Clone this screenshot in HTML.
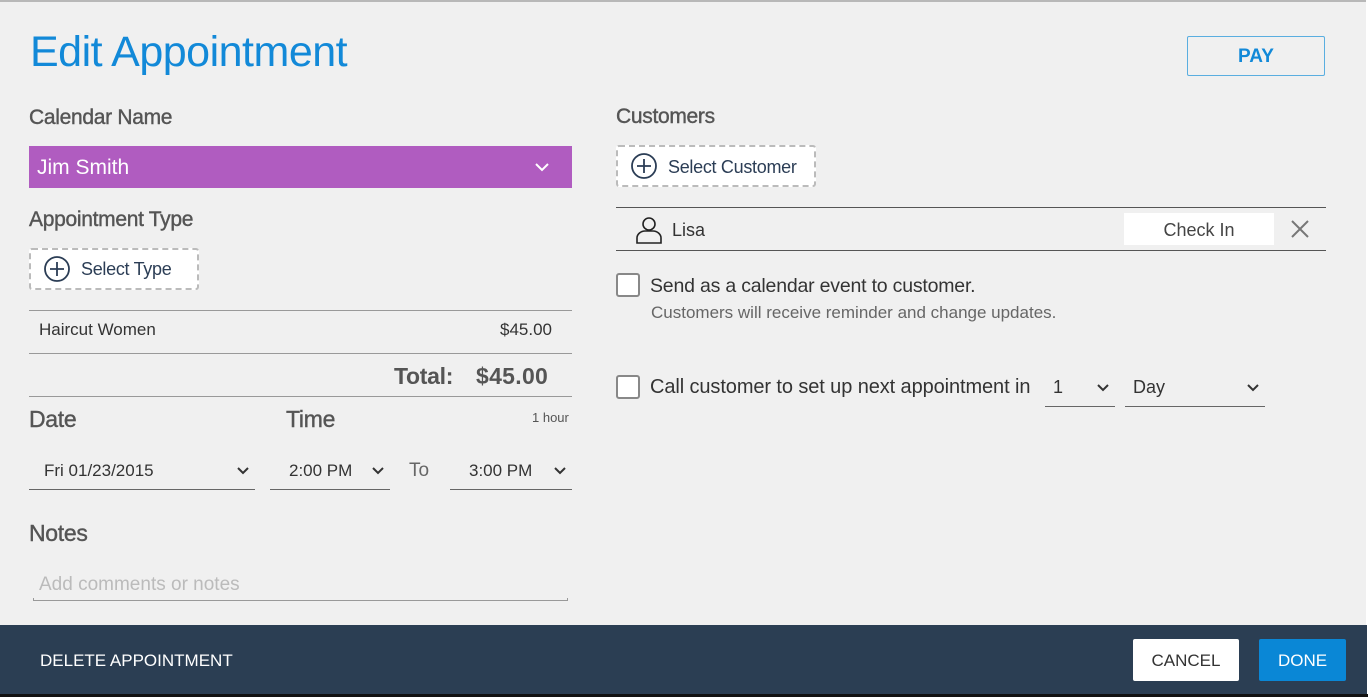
<!DOCTYPE html>
<html><head><style>
*{box-sizing:border-box;margin:0;padding:0}
body{width:1368px;height:697px;overflow:hidden;background:#f0f0f0;font-family:"Liberation Sans",sans-serif;position:relative;color:#333}
.a{position:absolute;white-space:nowrap}
.top{left:0;top:0;width:1368px;height:2px;background:#b8b8b8}
.lbl{font-size:21px;color:#555;letter-spacing:-0.3px;-webkit-text-stroke:0.4px #555}
.dash{border:2px dashed #bbb;background:#fff;border-radius:3px}
.line{height:1px;background:#999}
.sel{border-bottom:1px solid #666;font-size:17px;color:#333;padding-top:3px}
.chev{position:absolute;right:6px;top:4px}
.cb{width:24px;height:24px;border:2px solid #888;border-radius:3px;background:#fff}
</style></head><body>
<div class="a top"></div>
<div class="a" style="left:1366px;top:0;width:2px;height:697px;background:#fff"></div>
<div class="a" style="left:30px;top:28px;font-size:43px;color:#1289d8;letter-spacing:-0.5px">Edit Appointment</div>
<div class="a" style="left:1187px;top:36px;width:138px;height:40px;border:1px solid #5aaee0;border-radius:2px;color:#1289d8;font-weight:bold;font-size:19px;text-align:center;line-height:40px">PAY</div>

<div class="a lbl" style="left:29px;top:106px">Calendar Name</div>
<div class="a" style="left:29px;top:146px;width:543px;height:42px;background:#b05cc0;color:#fff;font-size:21px;line-height:44px;padding-left:8px">Jim Smith
<svg style="position:absolute;right:22px;top:16px" width="16" height="10"><path d="M2 2l6 6 6-6" stroke="#fff" stroke-width="2" fill="none"/></svg></div>
<div class="a lbl" style="left:29px;top:208px">Appointment Type</div>
<div class="a dash" style="left:29px;top:248px;width:170px;height:42px"></div>
<svg class="a" style="left:43px;top:255px" width="28" height="28"><circle cx="14" cy="14" r="12" stroke="#2b3d55" stroke-width="1.8" fill="none"/><path d="M14 7v14M7 14h14" stroke="#2b3d55" stroke-width="1.8"/></svg>
<div class="a" style="left:81px;top:259px;font-size:18px;color:#2b3d55;letter-spacing:-0.3px">Select Type</div>

<div class="a line" style="left:29px;top:310px;width:543px"></div>
<div class="a" style="left:39px;top:320px;font-size:17px">Haircut Women</div>
<div class="a" style="left:500px;top:320px;font-size:17px">$45.00</div>
<div class="a line" style="left:29px;top:353px;width:543px"></div>
<div class="a" style="left:394px;top:363px;font-size:23px;font-weight:bold;color:#555;letter-spacing:-0.3px">Total:</div>
<div class="a" style="left:476px;top:363px;font-size:23px;font-weight:bold;color:#555;letter-spacing:0.3px">$45.00</div>
<div class="a line" style="left:29px;top:396px;width:543px"></div>

<div class="a lbl" style="left:29px;top:406px;font-size:23px">Date</div>
<div class="a lbl" style="left:286px;top:406px;font-size:23px">Time</div>
<div class="a" style="left:532px;top:410px;font-size:13px;color:#555">1 hour</div>
<div class="a sel" style="left:29px;top:458px;width:226px;height:32px;padding-left:15px">Fri 01/23/2015<svg class="chev" width="14" height="10" style="top:8px;right:5px"><path d="M2 2l5 5 5-5" stroke="#333" stroke-width="2" fill="none"/></svg></div>
<div class="a sel" style="left:270px;top:458px;width:120px;height:32px;padding-left:19px">2:00 PM<svg class="chev" width="14" height="10" style="top:8px;right:5px"><path d="M2 2l5 5 5-5" stroke="#333" stroke-width="2" fill="none"/></svg></div>
<div class="a" style="left:409px;top:460px;font-size:19px;color:#666">To</div>
<div class="a sel" style="left:450px;top:458px;width:122px;height:32px;padding-left:19px">3:00 PM<svg class="chev" width="14" height="10" style="top:8px;right:5px"><path d="M2 2l5 5 5-5" stroke="#333" stroke-width="2" fill="none"/></svg></div>

<div class="a lbl" style="left:29px;top:520px;font-size:23px">Notes</div>
<div class="a" style="left:39px;top:574px;font-size:19px;color:#bbb">Add comments or notes</div>
<div class="a" style="left:33px;top:598px;width:535px;height:3px;border:1px solid #999;border-top:none"></div>

<div class="a lbl" style="left:616px;top:105px">Customers</div>
<div class="a dash" style="left:616px;top:145px;width:200px;height:42px"></div>
<svg class="a" style="left:630px;top:152px" width="28" height="28"><circle cx="14" cy="14" r="12" stroke="#2b3d55" stroke-width="1.8" fill="none"/><path d="M14 7v14M7 14h14" stroke="#2b3d55" stroke-width="1.8"/></svg>
<div class="a" style="left:668px;top:157px;font-size:18px;color:#2b3d55;letter-spacing:-0.3px">Select Customer</div>
<div class="a" style="left:616px;top:207px;width:710px;height:1px;background:#555"></div>
<svg class="a" style="left:634px;top:214px" width="30" height="30"><circle cx="15" cy="10" r="6" stroke="#222" stroke-width="1.6" fill="none"/><path d="M3 29v-5c0-4 4-7 8-7h8c4 0 8 3 8 7v5z" stroke="#222" stroke-width="1.6" fill="none"/></svg>
<div class="a" style="left:672px;top:220px;font-size:18px">Lisa</div>
<div class="a" style="left:1124px;top:213px;width:150px;height:32px;background:#fff;text-align:center;line-height:34px;font-size:18px;color:#444">Check In</div>
<svg class="a" style="left:1290px;top:219px" width="20" height="20"><path d="M2 2l16 16M18 2L2 18" stroke="#777" stroke-width="2"/></svg>
<div class="a" style="left:616px;top:250px;width:710px;height:1px;background:#555"></div>

<div class="a cb" style="left:616px;top:273px"></div>
<div class="a" style="left:650px;top:275px;font-size:19.5px;letter-spacing:-0.2px">Send as a calendar event to customer.</div>
<div class="a" style="left:651px;top:303px;font-size:17px;color:#666">Customers will receive reminder and change updates.</div>
<div class="a cb" style="left:616px;top:375px"></div>
<div class="a" style="left:650px;top:376px;font-size:20px;letter-spacing:-0.1px">Call customer to set up next appointment in</div>
<div class="a sel" style="left:1045px;top:374px;width:70px;height:33px;padding-left:8px;font-size:18px">1<svg class="chev" width="14" height="10" style="top:9px;right:5px"><path d="M2 2l5 5 5-5" stroke="#333" stroke-width="2" fill="none"/></svg></div>
<div class="a sel" style="left:1125px;top:374px;width:140px;height:33px;padding-left:8px;font-size:18px">Day<svg class="chev" width="14" height="10" style="top:9px;right:5px"><path d="M2 2l5 5 5-5" stroke="#333" stroke-width="2" fill="none"/></svg></div>

<div class="a" style="left:0;top:625px;width:1367px;height:69px;background:#2b3e53"></div>
<div class="a" style="left:0;top:694px;width:1368px;height:3px;background:#111"></div>
<div class="a" style="left:40px;top:651px;font-size:17px;color:#fff">DELETE APPOINTMENT</div>
<div class="a" style="left:1133px;top:639px;width:106px;height:42px;background:#fff;border-radius:2px;text-align:center;line-height:43px;font-size:17px;color:#333">CANCEL</div>
<div class="a" style="left:1259px;top:639px;width:87px;height:42px;background:#0a87d6;border-radius:2px;text-align:center;line-height:43px;font-size:17px;color:#fff">DONE</div>
</body></html>
